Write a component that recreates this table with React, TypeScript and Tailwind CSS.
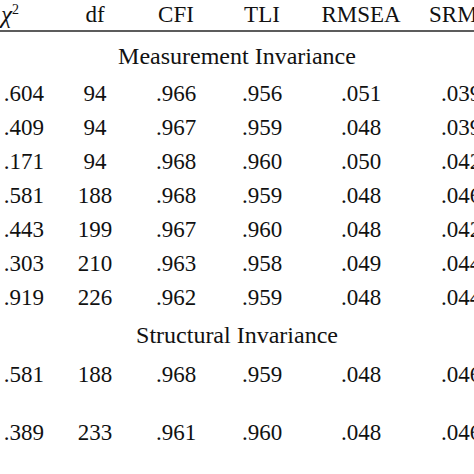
const cols = 'grid grid-cols-[44px_102px_60px_112px_86px_114px]';

const measurement = [
  ['.604', '94', '.966', '.956', '.051', '.039'],
  ['.409', '94', '.967', '.959', '.048', '.039'],
  ['.171', '94', '.968', '.960', '.050', '.042'],
  ['.581', '188', '.968', '.959', '.048', '.046'],
  ['.443', '199', '.967', '.960', '.048', '.042'],
  ['.303', '210', '.963', '.958', '.049', '.044'],
  ['.919', '226', '.962', '.959', '.048', '.044'],
];

const structural = [
  ['.581', '188', '.968', '.959', '.048', '.046'],
  ['.389', '233', '.961', '.960', '.048', '.046'],
];

function Row({ cells, rowClass }: { cells: string[]; rowClass: string }) {
  return (
    <div className={`${cols} ${rowClass}`}>
      <div className="text-right">{cells[0]}</div>
      {cells.slice(1).map((c, i) => (
        <div key={i} className="text-center whitespace-nowrap">
          {c}
        </div>
      ))}
    </div>
  );
}

export default function App() {
  return (
    <div
      className="w-[474px] h-[474px] overflow-hidden bg-white text-[#111111] text-[23px]"
      style={{ fontFamily: '"Liberation Serif", "Times New Roman", serif' }}
    >
      <div className="w-[518px]">
        {/* header */}
        <div className={`${cols} h-[30px] leading-[30px]`}>
          <div className="text-right pr-[25px] whitespace-nowrap -ml-[4px]">
            <span className="italic text-[25px]">χ</span>
            <span className="text-[14px] relative -top-[9px]">2</span>
          </div>
          <div className="text-center">df</div>
          <div className="text-center">CFI</div>
          <div className="text-center">TLI</div>
          <div className="text-center">RMSEA</div>
          <div className="text-center">SRMR</div>
        </div>
        <div className="h-[2px] bg-[#5c5c5c]" />
      </div>

      <div className="w-[474px] h-[45px] leading-[48px] text-center text-[24px]">Measurement Invariance</div>
      <div className="w-[518px]">
        {measurement.map((r, i) => (
          <Row key={i} cells={r} rowClass="h-[34px] leading-[34px]" />
        ))}
      </div>

      <div className="w-[474px] h-[40px] leading-[40px] text-center text-[24px]">Structural Invariance</div>
      <div className="w-[518px]">
        {structural.map((r, i) => (
          <Row key={i} cells={r} rowClass="h-[58px] leading-[40px]" />
        ))}
      </div>
    </div>
  );
}
